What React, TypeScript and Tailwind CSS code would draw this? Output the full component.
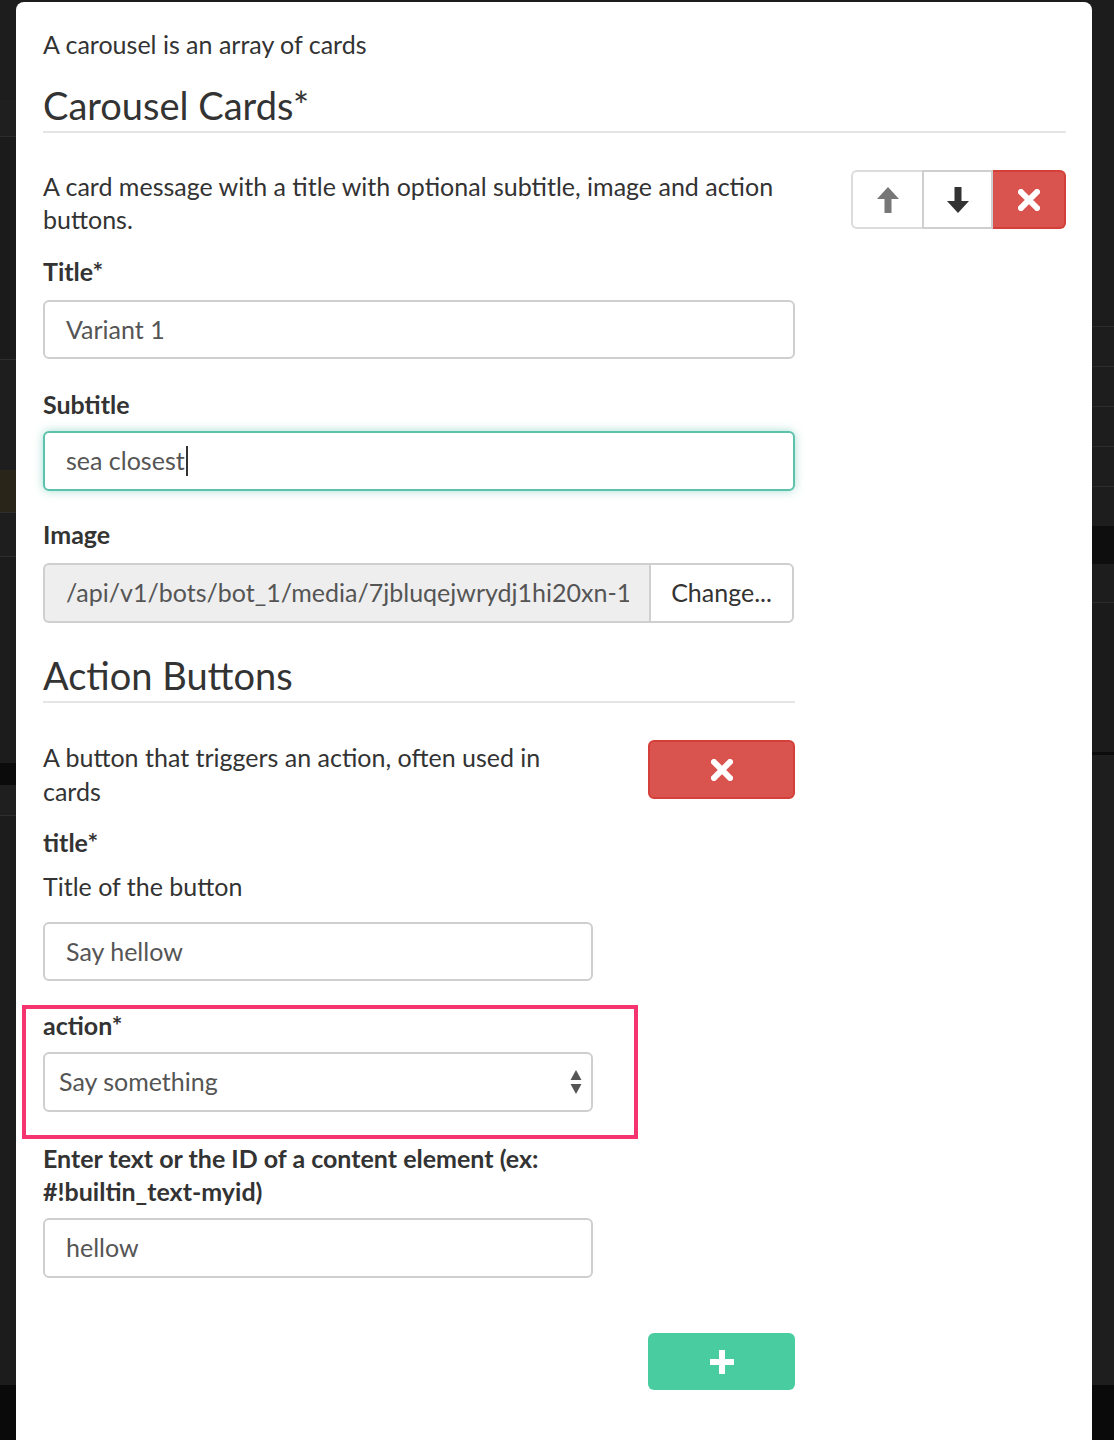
import * as React from 'react';

const font = { fontFamily: 'Lato, "Open Sans", sans-serif' };

// icons drawn to mimic the glyphicon set used by the original form
function ArrowUp({ color }: { color: string }) {
  return (
    <svg width="22" height="26" viewBox="0 0 22 26">
      <path d="M11 0 L22 12 L14.5 12 L14.5 26 L7.5 26 L7.5 12 L0 12 Z" fill={color} />
    </svg>
  );
}

function ArrowDown({ color }: { color: string }) {
  return (
    <svg width="22" height="26" viewBox="0 0 22 26">
      <path d="M11 26 L22 14 L14.5 14 L14.5 0 L7.5 0 L7.5 14 L0 14 Z" fill={color} />
    </svg>
  );
}

function Cross() {
  return (
    <svg width="22" height="22" viewBox="0 0 22 22">
      <path d="M3 3 L19 19 M19 3 L3 19" stroke="#fff" strokeWidth="6" strokeLinecap="square" />
    </svg>
  );
}

function Plus() {
  return (
    <svg width="24" height="24" viewBox="0 0 24 24">
      <path d="M12 0 V24 M0 12 H24" stroke="#fff" strokeWidth="6" />
    </svg>
  );
}

function Label({ children, mb = 'mb-[10px]' }: { children: React.ReactNode; mb?: string }) {
  return <div className={`text-[25px] leading-[33px] font-bold text-[#333] ${mb}`}>{children}</div>;
}

function Input({ value, h = 'h-[59px]', focused = false }: { value: string; h?: string; focused?: boolean }) {
  return (
    <div
      className={`w-full ${h} rounded-[6px] border-2 flex items-center pl-[21px] text-[25px] text-[#555] bg-white ${
        focused ? 'border-[#5cc2ab] shadow-[0_0_10px_rgba(92,194,171,0.55)]' : 'border-[#cfcfcf]'
      }`}
    >
      {value}
      {focused && <span className="w-[2px] h-[30px] bg-[#333] ml-[1px]" />}
    </div>
  );
}

const leftRows = [
  { h: 100, c: 'bg-[#1d1d1d]' },
  { h: 36, c: 'bg-[#1f1f1f]' },
  { h: 1, c: 'bg-[#2c2c2c]' },
  { h: 222, c: 'bg-[#1b1b1b]' },
  { h: 1, c: 'bg-[#2e2e2e]' },
  { h: 110, c: 'bg-[#1e1e1e]' },
  { h: 42, c: 'bg-[#2a2519]' },
  { h: 1, c: 'bg-[#2e2e2e]' },
  { h: 43, c: 'bg-[#1e1e1e]' },
  { h: 1, c: 'bg-[#2e2e2e]' },
  { h: 206, c: 'bg-[#1c1c1c]' },
  { h: 22, c: 'bg-[#0b0b0b]' },
  { h: 30, c: 'bg-[#1f1f1f]' },
  { h: 1, c: 'bg-[#2e2e2e]' },
  { h: 569, c: 'bg-[#1c1c1c]' },
  { h: 55, c: 'bg-[#0a0a0a]' },
];

const rightRows = [
  { h: 326, c: 'bg-[#1c1c1c]' },
  { h: 1, c: 'bg-[#2c2c2c]' },
  { h: 39, c: 'bg-[#1d1d1d]' },
  { h: 1, c: 'bg-[#2c2c2c]' },
  { h: 39, c: 'bg-[#1d1d1d]' },
  { h: 1, c: 'bg-[#2c2c2c]' },
  { h: 39, c: 'bg-[#1d1d1d]' },
  { h: 1, c: 'bg-[#2c2c2c]' },
  { h: 39, c: 'bg-[#1d1d1d]' },
  { h: 1, c: 'bg-[#2c2c2c]' },
  { h: 39, c: 'bg-[#1d1d1d]' },
  { h: 38, c: 'bg-[#0e0e0e]' },
  { h: 38, c: 'bg-[#1d1d1d]' },
  { h: 1, c: 'bg-[#2c2c2c]' },
  { h: 149, c: 'bg-[#1b1b1b]' },
  { h: 3, c: 'bg-[#0c0c0c]' },
  { h: 630, c: 'bg-[#1e1e1e]' },
  { h: 55, c: 'bg-[#0a0a0a]' },
];

export default function App(): React.ReactElement {
  return (
    <div className="flex w-[1114px] h-[1440px] overflow-hidden bg-[#1c1c1c]" style={font}>
      {/* dimmed page behind the modal */}
      <div className="w-[16px] flex flex-col shrink-0">
        {leftRows.map((r, i) => (
          <div key={i} className={r.c} style={{ height: r.h }} />
        ))}
      </div>

      <div className="flex-1 mt-[2px] bg-white rounded-t-[8px] pl-[27px] pr-[26px] pt-[26px] text-[#333]">
        <div className="text-[25px] leading-[33px]">A carousel is an array of cards</div>
        <div className="mt-[23px] pb-[5px] border-b-2 border-[#e5e5e5] text-[38px] leading-[42px]">Carousel Cards*</div>

        <div className="flex justify-between mt-[37px]">
          <div className="w-[752px]">
            <div className="text-[25px] leading-[33px]">
              A card message with a title with optional subtitle, image and action buttons.
            </div>

            <div className="mt-[19px]">
              <Label mb="mb-[12px]">Title*</Label>
              <Input value="Variant 1" />
            </div>

            <div className="mt-[29px]">
              <Label>Subtitle</Label>
              <Input value="sea closest" h="h-[60px]" focused />
            </div>

            <div className="mt-[27px]">
              <Label mb="mb-[12px]">Image</Label>
              <div className="flex h-[60px]">
                <div className="w-[606px] rounded-l-[6px] border-2 border-r-0 border-[#cfcfcf] bg-[#eeeeee] flex items-center pl-[21px] pr-[20px] text-[25px] text-[#555] overflow-hidden whitespace-nowrap">
                  <span className="overflow-hidden">/api/v1/bots/bot_1/media/7jbluqejwrydj1hi20xn-1.png</span>
                </div>
                <div className="w-[145px] rounded-r-[6px] border-2 border-[#cfcfcf] bg-white flex items-center justify-center text-[25px] text-[#333]">
                  Change...
                </div>
              </div>
            </div>

            <div className="mt-[31px] pb-[5px] border-b-2 border-[#e5e5e5] text-[38px] leading-[42px]">Action Buttons</div>

            <div className="flex justify-between mt-[37px]">
              <div className="w-[550px]">
                <div className="text-[25px] leading-[34px]">
                  A button that triggers an action, often used in cards
                </div>

                <div className="mt-[18px] text-[25px] leading-[33px] font-bold">title*</div>
                <div className="mt-[11px] text-[25px] leading-[33px]">Title of the button</div>
                <div className="mt-[19px]">
                  <Input value="Say hellow" />
                </div>

                <div className="mt-[24px] -ml-[21px] w-[616px] border-4 border-[#f5336f] pl-[17px] pr-[41px] pb-[23px]">
                  <Label>action*</Label>
                  <div className="h-[60px] rounded-[6px] border-2 border-[#cfcfcf] flex items-center justify-between pl-[14px] pr-[9px] text-[25px] text-[#555]">
                    <span>Say something</span>
                    <svg width="12" height="26" viewBox="0 0 12 26">
                      <path d="M6 1 L11.5 11 L0.5 11 Z M6 25 L11.5 15 L0.5 15 Z" fill="#555" />
                    </svg>
                  </div>
                </div>

                <div className="mt-[3px]">
                  <Label>Enter text or the ID of a content element (ex: #!builtin_text-myid)</Label>
                  <Input value="hellow" h="h-[60px]" />
                </div>
              </div>

              <div className="w-[147px] flex flex-col">
                <div className="h-[59px] rounded-[6px] bg-[#d9534f] border-2 border-[#d43f3a] flex items-center justify-center">
                  <Cross />
                </div>
              </div>
            </div>

            <div className="flex justify-end mt-[55px]">
              <div className="w-[147px] h-[57px] rounded-[6px] bg-[#48cca0] flex items-center justify-center">
                <Plus />
              </div>
            </div>
          </div>

          <div className="w-[215px] h-[59px] flex">
            <div className="w-[71px] rounded-l-[6px] border-2 border-r-0 border-[#dcdcdc] flex items-center justify-center">
              <ArrowUp color="#777" />
            </div>
            <div className="w-[71px] border-2 border-[#cfcfcf] flex items-center justify-center">
              <ArrowDown color="#333" />
            </div>
            <div className="w-[73px] rounded-r-[6px] bg-[#d9534f] border-2 border-l-0 border-[#d43f3a] flex items-center justify-center">
              <Cross />
            </div>
          </div>
        </div>
      </div>

      <div className="w-[22px] flex flex-col shrink-0">
        {rightRows.map((r, i) => (
          <div key={i} className={r.c} style={{ height: r.h }} />
        ))}
      </div>
    </div>
  );
}
